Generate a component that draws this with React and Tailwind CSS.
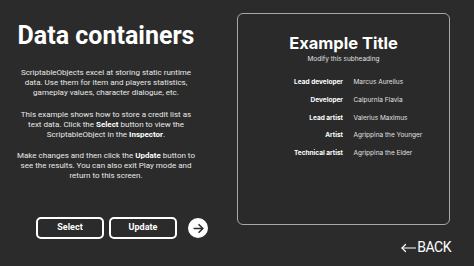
import React from "react";

const rows = [
  ["Lead developer", "Marcus Aurelius"],
  ["Developer", "Calpurnia Flavia"],
  ["Lead artist", "Valerius Maximus"],
  ["Artist", "Agrippina the Younger"],
  ["Technical artist", "Agrippina the Elder"],
];

export default function App() {
  return (
    <div className="w-[474px] h-[266px] bg-[#2b2b2b] flex overflow-hidden text-white">
      <div className="w-[212px] flex flex-col items-center font-['Roboto',sans-serif]">
        <h1 className="mt-[23px] text-[25px] leading-none font-bold whitespace-nowrap">Data containers</h1>
        <div className="mt-[20px] text-[8px] leading-[10px] text-center whitespace-nowrap text-[#e8e8e8]">
          <p>
            ScriptableObjects excel at storing static runtime
            <br />
            data. Use them for item and players statistics,
            <br />
            gameplay values, character dialogue, etc.
          </p>
          <p className="mt-[12px]">
            This example shows how to store a credit list as
            <br />
            text data. Click the <b className="text-white">Select</b> button to view the
            <br />
            ScriptableObject in the <b className="text-white">Inspector</b>.
          </p>
          <p className="mt-[11px]">
            Make changes and then click the <b className="text-white">Update</b> button to
            <br />
            see the results. You can also exit Play mode and
            <br />
            return to this screen.
          </p>
        </div>
        <div className="mt-[36px] flex items-center gap-[5px] pl-[36px] self-start">
          <button className="w-[68px] h-[22px] border-2 border-white rounded-[5px] text-[9px] font-bold">Select</button>
          <button className="w-[68px] h-[22px] border-2 border-white rounded-[5px] text-[9px] font-bold">Update</button>
          <div className="ml-[6px] w-[20px] h-[20px] rounded-full bg-white flex items-center justify-center">
            <svg width="13" height="13" viewBox="0 0 24 24" fill="none" stroke="#2b2b2b" strokeWidth="3" strokeLinecap="round" strokeLinejoin="round">
              <path d="M4 12h15" />
              <path d="M13 5l7 7-7 7" />
            </svg>
          </div>
        </div>
      </div>
      <div className="ml-[25px] flex flex-col font-['Inter',sans-serif]">
        <div className="mt-[13px] w-[213px] h-[212px] border border-[#a8a8a8] rounded-[6px] bg-[#2a2a2a] flex flex-col items-center">
          <div className="mt-[21px] text-[16.5px] leading-none font-bold whitespace-nowrap">Example Title</div>
          <div className="mt-[3px] text-[6.5px] leading-[9px] text-[#e0e0e0] whitespace-nowrap">Modify this subheading</div>
          <div className="mt-[14.5px] w-full grid grid-cols-2 gap-y-[8.8px] text-[6.5px] leading-[9px] whitespace-nowrap">
            {rows.map(([r, n]) => (
              <React.Fragment key={r}>
                <div className="text-right font-bold pr-[0.5px]">{r}</div>
                <div className="pl-[10px] text-[#e0e0e0]">{n}</div>
              </React.Fragment>
            ))}
          </div>
        </div>
        <div className="self-end mr-[-1px] mt-[15px] flex items-center text-[14px] leading-none whitespace-nowrap font-['Roboto',sans-serif] tracking-[-0.5px]">
          <svg width="15" height="10" viewBox="0 0 15 10" fill="none" stroke="white" strokeWidth="1.2" strokeLinecap="round" strokeLinejoin="round" className="mr-[1px] mt-[1px]">
            <path d="M1 5h14" />
            <path d="M4.5 1.5L1 5l3.5 3.5" />
          </svg>
          <span>BACK</span>
        </div>
      </div>
    </div>
  );
}
